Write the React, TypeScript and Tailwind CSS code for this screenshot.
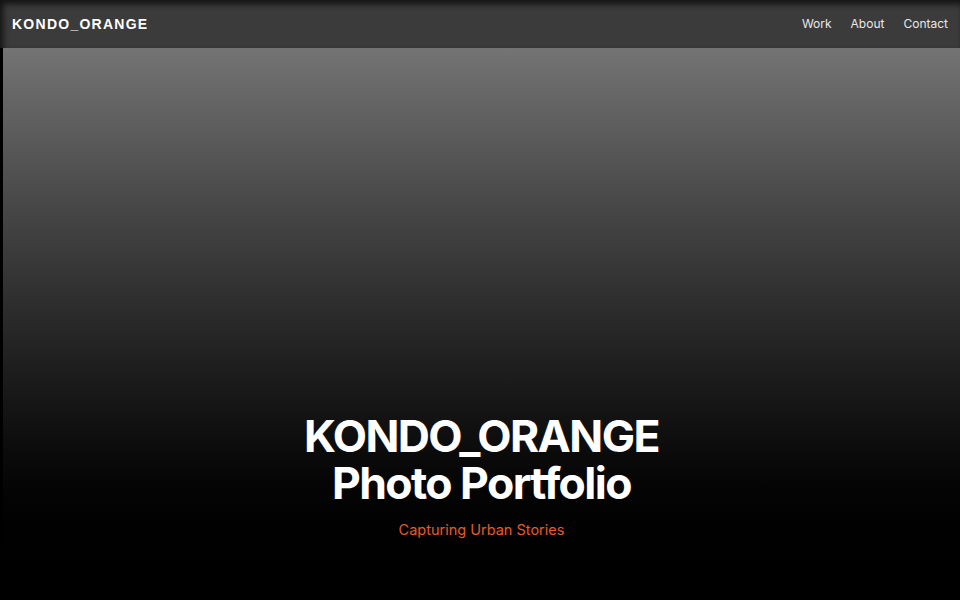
import React from "react";

export default function App() {
  return (
    <div className="h-[600px] w-[960px] overflow-hidden bg-black flex flex-col" style={{ fontFamily: "Inter, 'Liberation Sans', sans-serif" }}>
      <header className="h-12 shrink-0 bg-[#3b3b3b] shadow-[inset_3px_4px_6px_rgba(0,0,0,0.7)] flex items-center justify-between pl-3 pr-3">
        <div className="text-[14px] font-bold tracking-[0.09em] text-white" style={{ fontFamily: "'Liberation Sans', Arial, sans-serif" }}>
          KONDO_ORANGE
        </div>
        <nav className="flex items-center gap-[19px] text-[12px] text-[#e8e8e8]">
          <span>Work</span>
          <span>About</span>
          <span>Contact</span>
        </nav>
      </header>
      <main className="flex-1 ml-[3px] bg-gradient-to-b from-[#747474] to-black flex flex-col items-center justify-end pb-[59px]">
        <h1 className="text-center text-white font-bold text-[44.5px] leading-[47px] tracking-[-0.035em]">
          <span className="block">KONDO_ORANGE</span>
          <span className="block">Photo Portfolio</span>
        </h1>
        <p className="mt-[12px] text-[14.5px] text-[#e8592b]">Capturing Urban Stories</p>
      </main>
    </div>
  );
}
